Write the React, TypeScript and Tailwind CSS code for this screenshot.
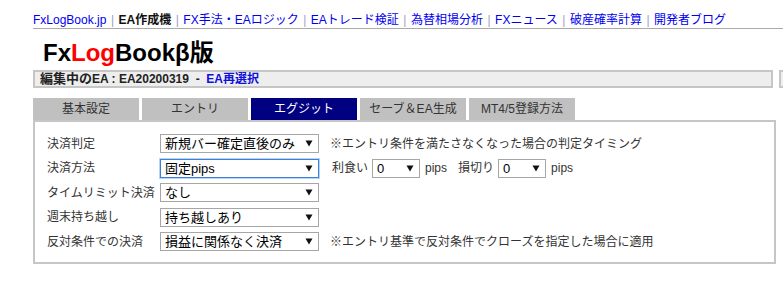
import React from "react";

function Arrow() {
  return (
    <svg width="8" height="7" viewBox="0 0 8 7" className="shrink-0">
      <polygon points="0.5,0.5 7.5,0.5 4,6.5" fill="#111" />
    </svg>
  );
}

function Sel({ text, className, focus }: { text: string; className: string; focus?: boolean }) {
  return (
    <div
      className={
        "h-[19px] flex items-center justify-between bg-white pl-[4px] pr-[5px] text-[13px] leading-[17px] text-black shrink-0 " +
        (focus
          ? "border border-[#3d7fd9] shadow-[0_0_0_1px_#b9d4f3] "
          : "border border-[#a6a6a6] ") +
        className
      }
    >
      <span className="whitespace-nowrap">{text}</span>
      <Arrow />
    </div>
  );
}

function Sep() {
  return <span className="mx-[4.5px] text-[#a0a0b8]">|</span>;
}

export default function App() {
  const tabs = ["基本設定", "エントリ", "エグジット", "セーブ＆EA生成", "MT4/5登録方法"];
  return (
    <div className="w-[783px] h-[282px] overflow-hidden bg-white pl-[33px] font-['Liberation_Sans','Noto_Sans_CJK_JP',sans-serif]">
      {/* nav */}
      <div className="pt-[12px] border-b border-[#aaaaaa]">
        <div className="h-[16px] flex items-center text-[12px] leading-[16px] whitespace-nowrap">
          <span className="text-[#0000ee]">FxLogBook.jp</span>
          <Sep />
          <span className="text-[#111] font-bold">EA作成機</span>
          <Sep />
          <span className="text-[#0000ee]">FX手法・EAロジック</span>
          <Sep />
          <span className="text-[#0000ee]">EAトレード検証</span>
          <Sep />
          <span className="text-[#0000ee]">為替相場分析</span>
          <Sep />
          <span className="text-[#0000ee]">FXニュース</span>
          <Sep />
          <span className="text-[#0000ee]">破産確率計算</span>
          <Sep />
          <span className="text-[#0000ee]">開発者ブログ</span>
        </div>
      </div>

      {/* title */}
      <div className="mt-[10px] h-[28px] pl-[10px] text-[24px] leading-[28px] font-bold text-black whitespace-nowrap">
        Fx<span className="text-[#ff0000]">Log</span>Bookβ版
      </div>

      {/* editing bar */}
      <div className="mt-[3px] flex gap-[6px]">
        <div className="w-[740px] h-[18px] shrink-0 border-2 border-[#c6c6c6] bg-[#eeeeee] pl-[5px] flex items-center text-[12px] leading-[14px] font-bold text-[#222] whitespace-nowrap">
          <span className="text-[13px]">編集中の</span>EA : EA20200319&nbsp;&nbsp;-&nbsp;&nbsp;<span className="text-[#1010dd]">EA再選択</span>
        </div>
        <div className="w-[30px] h-[18px] shrink-0 border-2 border-[#c6c6c6] bg-[#eeeeee]" />
      </div>

      {/* tabs */}
      <div className="mt-[10px] flex gap-[3px]">
        {tabs.map((t, i) => (
          <div
            key={t}
            className={
              "w-[106px] h-[22px] flex items-center justify-center text-[12px] leading-[16px] whitespace-nowrap " +
              (i === 2 ? "bg-[#000080] text-white" : "bg-[#c0c0c0] text-[#333]")
            }
          >
            {t}
          </div>
        ))}
      </div>

      {/* panel */}
      <div className="w-[743px] border-2 border-[#c6c6c6] pl-[12px] pt-[12px] pb-[11px] flex flex-col gap-[5.5px] text-[12px] text-[#333]">
        <div className="flex items-center h-[19px]">
          <div className="w-[113px] shrink-0 whitespace-nowrap">決済判定</div>
          <Sel className="w-[159px]" text="新規バー確定直後のみ" />
          <div className="ml-[11px] whitespace-nowrap">※エントリ条件を満たさなくなった場合の判定タイミング</div>
        </div>
        <div className="flex items-center h-[19px]">
          <div className="w-[113px] shrink-0 whitespace-nowrap">決済方法</div>
          <Sel className="w-[159px]" text="固定pips" focus />
          <div className="ml-[13px] whitespace-nowrap">利食い</div>
          <Sel className="ml-[4px] w-[48px]" text="0" />
          <div className="ml-[5px] whitespace-nowrap">pips</div>
          <div className="ml-[11px] whitespace-nowrap">損切り</div>
          <Sel className="ml-[4px] w-[48px]" text="0" />
          <div className="ml-[5px] whitespace-nowrap">pips</div>
        </div>
        <div className="flex items-center h-[19px]">
          <div className="w-[113px] shrink-0 whitespace-nowrap">タイムリミット決済</div>
          <Sel className="w-[159px]" text="なし" />
        </div>
        <div className="flex items-center h-[19px]">
          <div className="w-[113px] shrink-0 whitespace-nowrap">週末持ち越し</div>
          <Sel className="w-[159px]" text="持ち越しあり" />
        </div>
        <div className="flex items-center h-[19px]">
          <div className="w-[113px] shrink-0 whitespace-nowrap">反対条件での決済</div>
          <Sel className="w-[159px]" text="損益に関係なく決済" />
          <div className="ml-[11px] whitespace-nowrap">※エントリ基準で反対条件でクローズを指定した場合に適用</div>
        </div>
      </div>
    </div>
  );
}
